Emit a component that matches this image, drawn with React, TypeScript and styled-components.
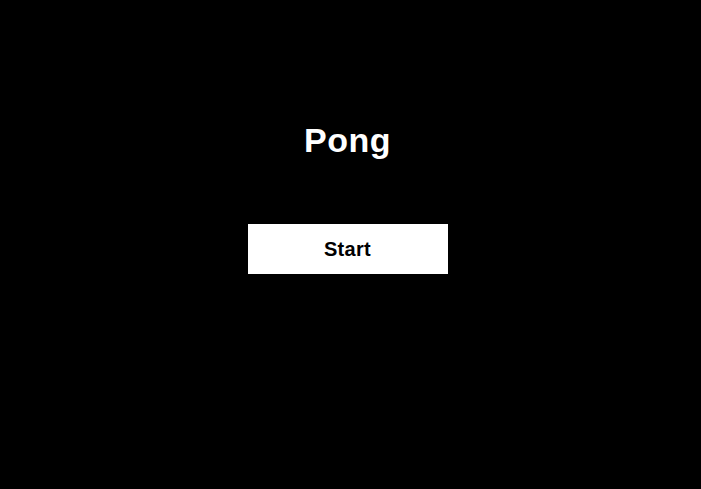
import styled, { createGlobalStyle } from 'styled-components';

const GlobalStyle = createGlobalStyle`
    html, body {
        margin: 0;
        padding: 0;
        background: #000000;
        height: 100%;
    }

    #root {
        height: 100%;
    }
`;

const Screen = styled.div`
    width: 100%;
    height: 100%;
    min-height: 489px;
    display: flex;
    flex-direction: column;
    align-items: center;
    padding: 120px 6px 0 0;
    box-sizing: border-box;
    font-family: 'Liberation Sans', Arial, sans-serif;
`;

const Title = styled.h1`
    margin: 0;
    color: #ffffff;
    font-size: 34px;
    font-weight: 700;
    line-height: 40px;
    letter-spacing: 0.5px;
`;

const StartButton = styled.button`
    margin-top: 64px;
    width: 200px;
    height: 50px;
    border: none;
    background: #ffffff;
    color: #000000;
    font-family: inherit;
    font-size: 20px;
    font-weight: 700;
    letter-spacing: 0.3px;
    cursor: pointer;
`;

export default function App() {
    return (
        <>
            <GlobalStyle />
            <Screen>
                <Title>Pong</Title>
                <StartButton>Start</StartButton>
            </Screen>
        </>
    );
}
